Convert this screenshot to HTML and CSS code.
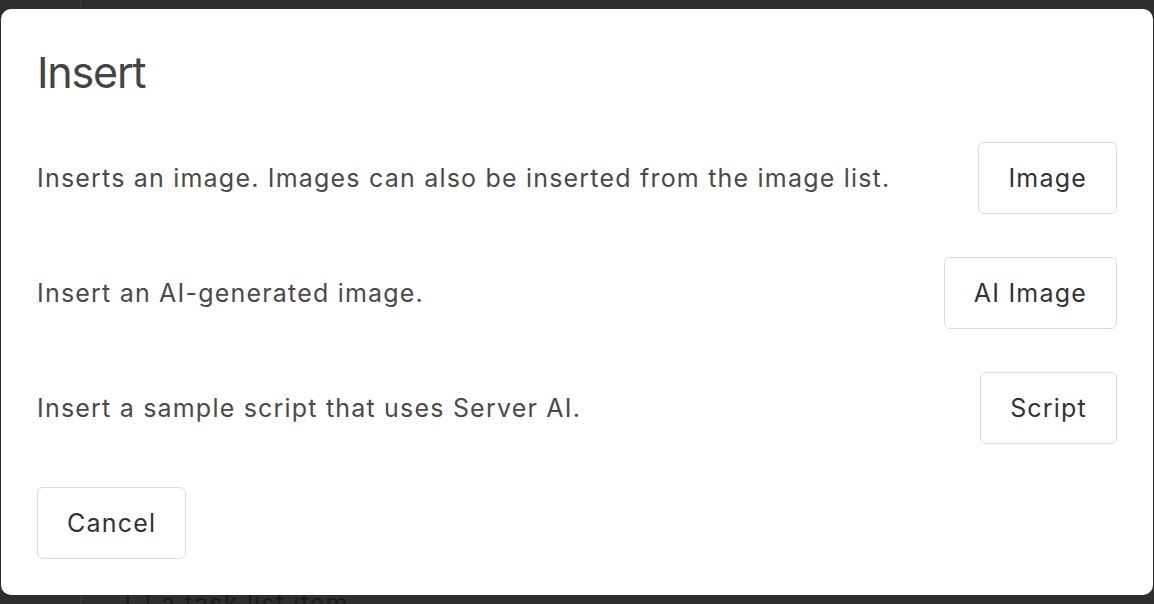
FILE: index.html
```html
<!DOCTYPE html>
<html lang="en">
<head>
<meta charset="utf-8">
<title>Insert</title>
<link rel="stylesheet" href="styles.css">
</head>
<body>
<div class="page">
  <aside class="sidebar"></aside>
  <main class="editor">
    <p class="task">[ ] a task list item</p>
  </main>
</div>
<div class="modal" role="dialog" aria-labelledby="insert-title">
  <h1 class="modal-title" id="insert-title">Insert</h1>
  <div class="modal-body">
    <div class="option-row">
      <span class="option-text">Inserts an image. Images can also be inserted from the image list.</span>
      <button class="btn">Image</button>
    </div>
    <div class="option-row">
      <span class="option-text">Insert an AI-generated image.</span>
      <button class="btn">AI Image</button>
    </div>
    <div class="option-row">
      <span class="option-text">Insert a sample script that uses Server AI.</span>
      <button class="btn">Script</button>
    </div>
    <div class="option-row">
      <button class="btn">Cancel</button>
    </div>
  </div>
</div>
</body>
</html>
```
FILE: styles.css
```css
* { box-sizing: border-box; }
html, body {
  margin: 0;
  padding: 0;
  width: 1154px;
  height: 604px;
  overflow: hidden;
  background: #2e2e2e;
  font-family: Inter, "Noto Sans", "Liberation Sans", sans-serif;
}
.page {
  display: flex;
  height: 604px;
}
.sidebar {
  width: 81px;
  flex: none;
  border-right: 1px solid #3a3a3a;
}
.editor {
  flex: 1;
  padding: 588px 0 0 43px;
}
.task {
  margin: 0;
  font-size: 25px;
  line-height: 30px;
  letter-spacing: 1.2px;
  color: #1c1c1c;
  white-space: nowrap;
}
.modal {
  position: fixed;
  top: 9px;
  left: 1px;
  width: 1152px;
  height: 586px;
  background: #ffffff;
  border-radius: 10px;
  padding: 37px 36px 36px 36px;
  display: flex;
  flex-direction: column;
}
.modal-title {
  margin: 0 0 43px 0;
  font-size: 43px;
  line-height: 53px;
  font-weight: 400;
  letter-spacing: -1.2px;
  color: #444444;
}
.modal-body {
  display: flex;
  flex-direction: column;
  gap: 43px;
}
.option-row {
  display: flex;
  align-items: center;
  justify-content: space-between;
  min-height: 72px;
}
.option-text {
  font-size: 25px;
  line-height: 36px;
  letter-spacing: 1.2px;
  color: #4a4a4a;
}
.btn {
  font-family: inherit;
  font-size: 25px;
  line-height: 36px;
  letter-spacing: 1.2px;
  color: #333333;
  background: #ffffff;
  border: 1px solid #dcdcdc;
  border-radius: 6px;
  padding: 17px 29px 17px 29px;
  cursor: pointer;
}
```
